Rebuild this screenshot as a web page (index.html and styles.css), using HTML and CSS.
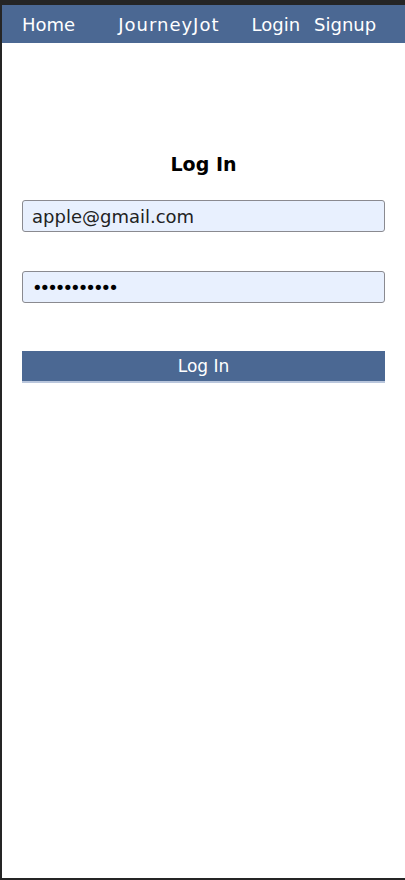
FILE: index.html
```html
<!DOCTYPE html>
<html lang="en">
<head>
<meta charset="utf-8">
<title>JourneyJot - Log In</title>
<link rel="stylesheet" href="styles.css">
</head>
<body>
<div class="page">
  <nav class="nav">
    <a class="nav-link home" href="#">Home</a>
    <a class="nav-link brand" href="#">JourneyJot</a>
    <a class="nav-link login" href="#">Login</a>
    <a class="nav-link signup" href="#">Signup</a>
  </nav>
  <main class="main">
    <form class="form">
      <h2 class="title">Log In</h2>
      <input class="field email" type="email" value="apple@gmail.com">
      <input class="field password" type="password" value="applepassw0">
      <button class="submit" type="button">Log In</button>
    </form>
  </main>
</div>
</body>
</html>
```

FILE: styles.css
```css
html {
  background: #252525;
}
body {
  margin: 0;
  padding: 5px 0 2px 2px;
  font-family: "DejaVu Sans", "Open Sans", sans-serif;
}
.page {
  background: #ffffff;
  height: 873px;
  display: flex;
  flex-direction: column;
}
.nav {
  background: #4b6893;
  height: 38px;
  display: flex;
  align-items: center;
  padding-left: 20px;
}
.nav-link {
  color: #ffffff;
  text-decoration: none;
  font-size: 18px;
}
.home { margin-right: 43px; }
.brand { margin-right: 32px; letter-spacing: 1px; }
.login { margin-right: 14px; }
.main {
  padding: 0 20px;
}
.form {
  display: flex;
  flex-direction: column;
  margin-top: 108px;
}
.title {
  margin: 0 0 22px;
  text-align: center;
  font-size: 19px;
  font-weight: 700;
  line-height: 27px;
  color: #000;
}
.field {
  box-sizing: border-box;
  height: 32px;
  margin: 0;
  padding: 0 9px;
  border: 1px solid #8a8a90;
  border-radius: 3px;
  background: #e8f0fe;
  font-family: inherit;
  font-size: 18px;
  color: #222;
}
.password {
  margin-top: 39px;
  letter-spacing: -3px;
  color: #000;
}
.submit {
  margin-top: 48px;
  height: 32px;
  border: none;
  border-bottom: 2px solid #b9c6dc;
  background: #4b6893;
  color: #ffffff;
  font-family: inherit;
  font-size: 17px;
  padding: 0;
}
```
